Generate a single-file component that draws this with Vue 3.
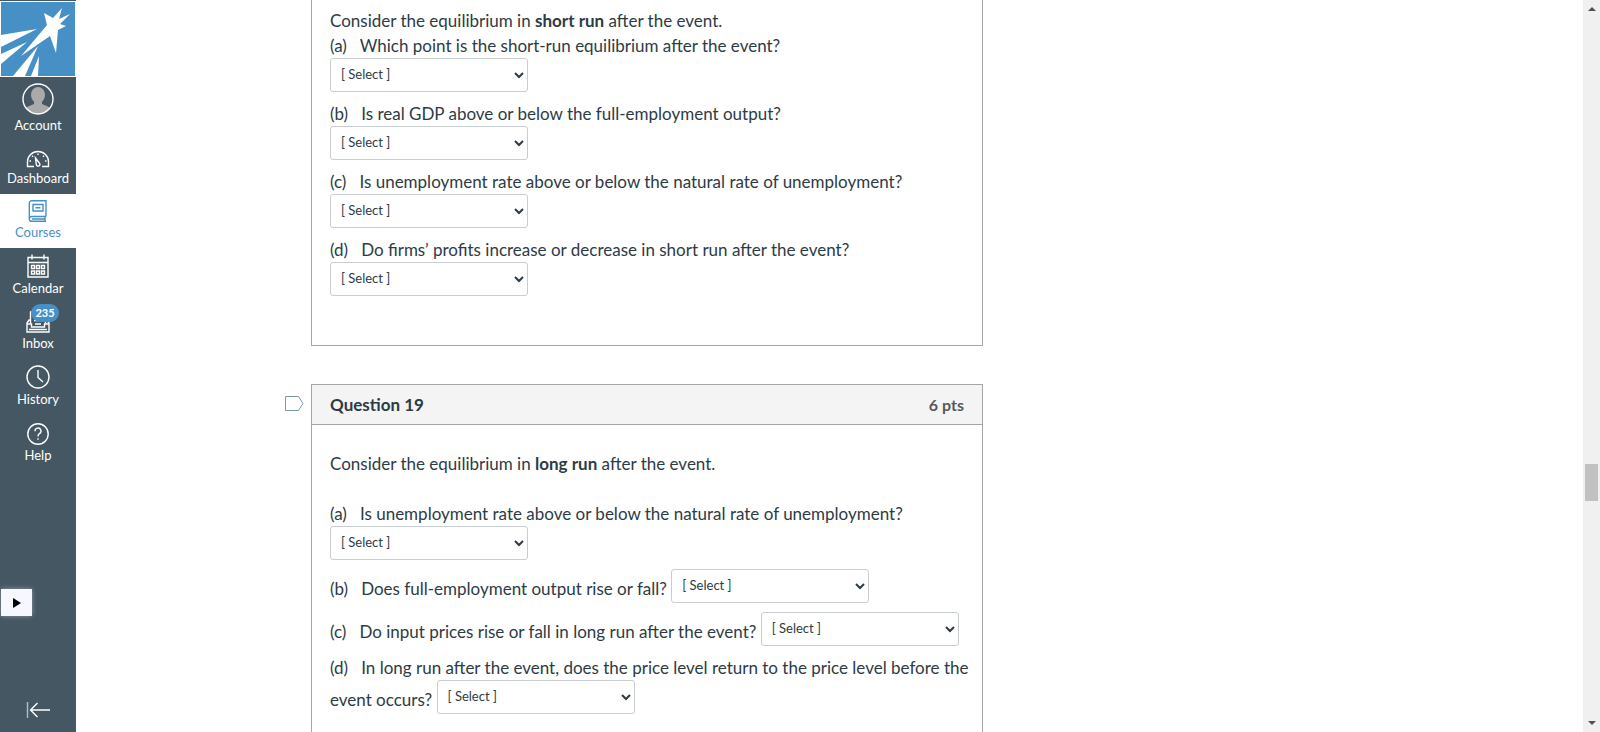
<template>
  <div class="app">
    <nav class="nav" aria-label="Global navigation">
      <a href="#" class="nav__logo" aria-label="Home">
        <svg viewBox="0 0 76 76">
          <rect width="76" height="76" fill="#fff" />
          <rect x="1" y="1" width="74" height="74" fill="#4790c6" />
          <g fill="#fff">
            <path d="M62 7 59 18 70 13 60 23 66 25 58 29 56 52 50 35 21 55 47 24 44 12 53 17Z" />
            <path d="M37 28 1 46V34Z" />
            <path d="M27 41 1 63V53Z" />
            <path d="M38 45 25 75H13Z" />
            <path d="M39 55 38 75H31Z" />
          </g>
        </svg>
      </a>
      <ul class="nav__items">
        <li v-for="item in navItems" :key="item.id">
          <a
            href="#"
            class="nav-item"
            :class="['nav-item--' + item.id, { 'nav-item--active': item.id === 'courses' }]"
          >
            <span class="nav-item__icon">
              <svg v-if="item.id === 'account'" width="32" height="32" viewBox="0 0 32 32">
                <defs>
                  <clipPath id="avatar"><circle cx="16" cy="16" r="15" /></clipPath>
                </defs>
                <circle cx="16" cy="16" r="15" fill="#455763" />
                <g clip-path="url(#avatar)" fill="#aaa">
                  <ellipse cx="16" cy="12" rx="7" ry="8" />
                  <path d="M12 17h8v4l7 3q4 2 4 8H1q0-6 4-8l7-3Z" />
                </g>
                <circle cx="16" cy="16" r="15" fill="none" stroke="#fff" stroke-width="1.4" />
              </svg>
              <svg v-else-if="item.id === 'dashboard'" width="24" height="18" viewBox="0 0 24 18">
                <path d="M8 16.500H1.500V11.500A10.500 10 0 0 1 22.500 11.500V16.500H16" />
                <path d="M9.500 8 10.300 14.500A1.800 1.800 0 1 0 13.300 13Z" />
                <path d="M12 3.500v1.500M6 5.800l1 1M18 5.800l-1 1M3.500 11h1.500M19 11h1.500" />
              </svg>
              <svg v-else-if="item.id === 'courses'" width="20" height="22" viewBox="0 0 20 22">
                <path d="M18 16.500H3.700A2.400 2.400 0 0 0 3.700 21.300H18M17 16.500V21.300M1.300 19V3A2.200 2.200 0 0 1 3.500 .7H18V16.500" />
                <path d="M5 4.500H15V11H5ZM7.500 7.800H12.500M4 19H17" />
              </svg>
              <svg v-else-if="item.id === 'calendar'" width="22" height="24" viewBox="0 0 22 24">
                <path d="M1 3.500H21V23H1ZM1 8.500H21M5 .5V5.500M17 .5V5.500" />
                <path d="M4.500 11.500h3v3h-3ZM9.500 11.500h3v3h-3ZM14.500 11.500h3v3h-3ZM4.500 17h3v3h-3ZM9.500 17h3v3h-3ZM14.500 17h3v3h-3Z" />
              </svg>
              <svg v-else-if="item.id === 'inbox'" width="24" height="22" viewBox="0 0 24 22">
                <path d="M4.500 12.500V1H19.500V12.500M4.500 9H3L1 12V21H23V12L21 9H19.500" />
                <path d="M1 13H5.500V16H18.500V13H23M8 9.500H16M9 13H15M3 18.500H21" />
              </svg>
              <svg v-else-if="item.id === 'history'" width="24" height="24" viewBox="0 0 24 24">
                <circle cx="12" cy="12" r="11" />
                <path d="M12 5V12.500L17 17" />
              </svg>
              <svg v-else width="22" height="22" viewBox="0 0 22 22">
                <circle cx="11" cy="11" r="10.200" />
                <path d="M8 8.200A3 3 0 1 1 12.500 10.700Q11 11.500 11 13.500M11 15.300V16.800" />
              </svg>
              <span v-if="item.badge" class="nav-item__badge">{{ item.badge }}</span>
            </span>
            <span class="nav-item__label">{{ item.label }}</span>
          </a>
        </li>
      </ul>
      <button class="nav__play" type="button" aria-label="Play">
        <svg width="8" height="10" viewBox="0 0 8 10"><path d="M0 0 8 5 0 10Z" /></svg>
      </button>
      <button class="nav__collapse" type="button" aria-label="Minimize global navigation">
        <svg width="24" height="18" viewBox="0 0 24 18">
          <path d="M1.500 1V17" stroke="#b4bdc3" />
          <path d="M24 9H5M11.500 2 4.500 9 11.500 16" />
        </svg>
      </button>
    </nav>

    <main class="quiz">
      <section class="question question--continued">
        <div class="question__text">
          <p>Consider the equilibrium in <strong>short run</strong> after the event.</p>
          <p v-for="part in shortRun" :key="part.id">
            <label :for="'short-' + part.id">({{ part.id }})&nbsp;&nbsp; {{ part.text }}</label>
            <br />
            <select :id="'short-' + part.id" v-model="part.answer" class="answer">
              <option value="">[ Select ]</option>
            </select>
          </p>
        </div>
      </section>

      <div class="quiz__row">
        <button class="flag" type="button" aria-label="Flag question">
          <svg width="19" height="15" viewBox="0 0 19 15">
            <path d="M.5 .5H13.500L18 7.500 13.500 14.500H.5Z" />
          </svg>
        </button>
        <section class="question">
          <header class="question__header">
            <h2 class="question__name">Question 19</h2>
            <span class="question__points">6 pts</span>
          </header>
          <div class="question__text">
            <p class="question__intro">
              Consider the equilibrium in <strong>long run</strong> after the event.
            </p>
            <p v-for="part in longRun" :key="part.id">
              <label :for="'long-' + part.id">({{ part.id }})&nbsp;&nbsp; {{ part.text }}</label>
              <br v-if="part.id === 'a'" />
              {{ ' ' }}
              <select :id="'long-' + part.id" v-model="part.answer" class="answer">
                <option value="">[ Select ]</option>
              </select>
            </p>
          </div>
        </section>
      </div>
    </main>

    <div class="scrollbar" aria-hidden="true">
      <span class="scrollbar__arrow scrollbar__arrow--up"></span>
      <span class="scrollbar__before"></span>
      <span class="scrollbar__thumb"></span>
      <span class="scrollbar__after"></span>
      <span class="scrollbar__arrow scrollbar__arrow--down"></span>
    </div>
  </div>
</template>

<script setup>
import { ref } from 'vue'

const navItems = [
  { id: 'account', label: 'Account' },
  { id: 'dashboard', label: 'Dashboard' },
  { id: 'courses', label: 'Courses' },
  { id: 'calendar', label: 'Calendar' },
  { id: 'inbox', label: 'Inbox', badge: 235 },
  { id: 'history', label: 'History' },
  { id: 'help', label: 'Help' }
]

const shortRun = ref([
  { id: 'a', text: 'Which point is the short-run equilibrium after the event?', answer: '' },
  { id: 'b', text: 'Is real GDP above or below the full-employment output?', answer: '' },
  { id: 'c', text: 'Is unemployment rate above or below the natural rate of unemployment?', answer: '' },
  { id: 'd', text: 'Do firms’ profits increase or decrease in short run after the event?', answer: '' }
])

const longRun = ref([
  { id: 'a', text: 'Is unemployment rate above or below the natural rate of unemployment?', answer: '' },
  { id: 'b', text: 'Does full-employment output rise or fall?', answer: '' },
  { id: 'c', text: 'Do input prices rise or fall in long run after the event?', answer: '' },
  {
    id: 'd',
    text: 'In long run after the event, does the price level return to the price level before the event occurs?',
    answer: ''
  }
])
</script>

<style>
body {
  margin: 0;
  background: #fff;
}
</style>

<style scoped>
.app {
  display: flex;
  height: 100vh;
  overflow: hidden;
  font-family: Lato, 'Liberation Sans', sans-serif;
  font-size: 17px;
  line-height: 25px;
  color: #2d3b45;
}

button {
  padding: 0;
  border: none;
  background: none;
  cursor: pointer;
}

svg {
  display: block;
}

.nav {
  display: flex;
  flex-direction: column;
  flex: none;
  width: 76px;
  padding-top: 1px;
  box-sizing: border-box;
  background: #455763;
}

.nav__logo svg {
  width: 76px;
  height: 76px;
}

.nav__items {
  list-style: none;
  margin: 0;
  padding: 0;
}

.nav-item {
  display: flex;
  flex-direction: column;
  align-items: center;
  justify-content: flex-end;
  gap: 1px;
  height: 56px;
  padding-bottom: 7px;
  box-sizing: border-box;
  color: #fff;
  font-size: 13px;
  line-height: 18px;
  text-decoration: none;
}

.nav-item--account {
  height: 60px;
  padding-bottom: 3px;
}

.nav-item--dashboard {
  height: 57px;
}

.nav-item--inbox {
  height: 55px;
}

.nav-item--active {
  height: 54px;
  background: #fff;
  color: #4790c6;
}

.nav-item__icon {
  position: relative;
}

.nav-item__icon svg,
.nav__collapse svg {
  fill: none;
  stroke: currentColor;
  stroke-width: 1.4;
}

.nav-item--account svg {
  stroke: none;
}

.nav-item__badge {
  position: absolute;
  top: -7px;
  left: 5px;
  width: 28px;
  border-radius: 9px;
  background: #4790c6;
  color: #fff;
  font-size: 11px;
  font-weight: 700;
  text-align: center;
}

.nav__play {
  display: flex;
  align-items: center;
  justify-content: center;
  width: 31px;
  height: 27px;
  margin: auto 0 0 1px;
  background: #f7f8ff;
  box-shadow: 0 0 5px rgba(255, 255, 255, 0.4);
}

.nav__collapse {
  align-self: center;
  margin: 85px 0 13px;
  color: #fff;
}

.quiz {
  flex: 1;
  min-width: 0;
  padding: 0 20px 0 209px;
}

.quiz__row {
  display: flex;
  align-items: flex-start;
  margin-top: 38px;
}

.flag {
  margin: 12px 7px 0 0;
}

.flag svg {
  fill: none;
  stroke: #7b97a8;
}

.question {
  flex: 1;
  max-width: 672px;
  box-sizing: border-box;
  border: 1px solid #a5a5a5;
}

.question--continued {
  margin-left: 26px;
  padding: 8px 0 40px;
  border-top: none;
}

.question__header {
  display: flex;
  align-items: center;
  justify-content: space-between;
  height: 39px;
  padding: 0 18px;
  border-bottom: 1px solid #a5a5a5;
  background: #f4f4f4;
}

.question__name {
  margin: 0;
  font-size: 17px;
  font-weight: 700;
}

.question__points {
  color: #595959;
  font-size: 16px;
  font-weight: 700;
}

.question__text {
  padding: 0 10px 0 18px;
}

.question__header + .question__text {
  padding-top: 26px;
  padding-bottom: 40px;
}

.question__text p {
  margin: 0;
}

.question__text .question__intro {
  margin-bottom: 25px;
}

.answer {
  width: 198px;
  height: 34px;
  margin: 0 0 9px;
  padding: 0 5px 2px 6px;
  border: 1px solid #c7cdd1;
  border-radius: 3px;
  background: #fff;
  color: #2d3b45;
  font-family: inherit;
  font-size: 13px;
  vertical-align: middle;
}

.scrollbar {
  display: flex;
  flex-direction: column;
  align-items: center;
  flex: none;
  width: 17px;
  padding: 7px 0;
  box-sizing: border-box;
  background: #f0f0f0;
}

.scrollbar__arrow {
  border: 4px solid transparent;
}

.scrollbar__arrow--up {
  border-top: none;
  border-bottom-color: #505050;
}

.scrollbar__arrow--down {
  border-bottom: none;
  border-top-color: #505050;
}

.scrollbar__before {
  flex: 453;
}

.scrollbar__thumb {
  flex: 37;
  width: 13px;
  background: #c1c1c1;
}

.scrollbar__after {
  flex: 220;
}
</style>
